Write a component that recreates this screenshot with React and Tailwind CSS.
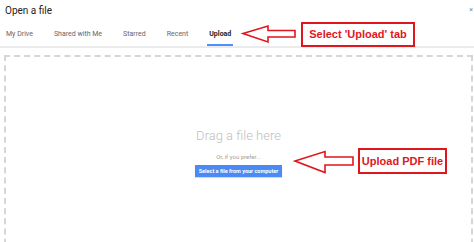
import React from "react";

const tabs = ["My Drive", "Shared with Me", "Starred", "Recent", "Upload"];

const Annotation = ({ className, children }) => (
  <div
    className={`absolute flex items-center justify-center border-2 border-[#e0161e] bg-white text-[#e0161e] font-bold font-['Liberation_Sans',sans-serif] ${className}`}
  >
    {children}
  </div>
);

export default function App() {
  return (
    <div className="relative w-[474px] h-[242px] overflow-hidden bg-white font-['Roboto',sans-serif]">
      {/* title */}
      <div className="flex items-start justify-between pl-[5px] pr-[1px] pt-[4px] h-[22px]">
        <span className="text-[10px] leading-[14px] text-[#222]">Open a file</span>
        <span className="text-[7px] leading-[10px] text-[#888] mt-[1px]">×</span>
      </div>

      {/* tabs */}
      <div className="flex items-stretch gap-[21px] pl-[6px] h-[26px] border-b-2 border-[#ebebeb]">
        {tabs.map((t) =>
          t === "Upload" ? (
            <div
              key={t}
              className="flex items-center px-[2px] -mx-[2px] border-b-2 border-[#4d90fe] pt-[2px] text-[7px] font-bold text-[#222]"
            >
              {t}
            </div>
          ) : (
            <div key={t} className="flex items-center text-[7px] text-[#666]">
              {t}
            </div>
          )
        )}
      </div>

      {/* drop zone */}
      <div className="mt-[7px] ml-[4px] mr-[1px] h-[200px] border-2 border-dashed border-[#d6d6d6] flex flex-col items-center pt-[71px]">
        <div className="text-[13px] leading-[16px] font-light text-[#c0c0c0]">Drag a file here</div>
        <div className="mt-[9px] text-[6px] leading-[8px] text-[#a0a0a0]">Or, if you prefer...</div>
        <button className="mt-[4px] w-[87px] h-[12px] bg-[#4a8af4] text-white text-[5.5px] font-bold leading-[12px] shadow-[0_1px_1px_rgba(0,0,0,0.15)]">
          Select a file from your computer
        </button>
      </div>

      {/* annotations */}
      <svg className="absolute inset-0 pointer-events-none" width="474" height="242" viewBox="0 0 474 242">
        <polygon
          points="243,33.5 268,26 268,30.5 295,30.5 295,37 268,37 268,42"
          fill="white"
          stroke="#e0161e"
          strokeWidth="1.6"
        />
        <polygon
          points="295,161 325,151.5 325,157 353,157 353,165 325,165 325,172.5"
          fill="white"
          stroke="#e0161e"
          strokeWidth="1.6"
        />
      </svg>
      <Annotation className="left-[301px] top-[22px] w-[114px] h-[25px] text-[11px]">
        Select 'Upload' tab
      </Annotation>
      <Annotation className="left-[358px] top-[148px] w-[89px] h-[26px] text-[11px]">
        Upload PDF file
      </Annotation>
    </div>
  );
}
